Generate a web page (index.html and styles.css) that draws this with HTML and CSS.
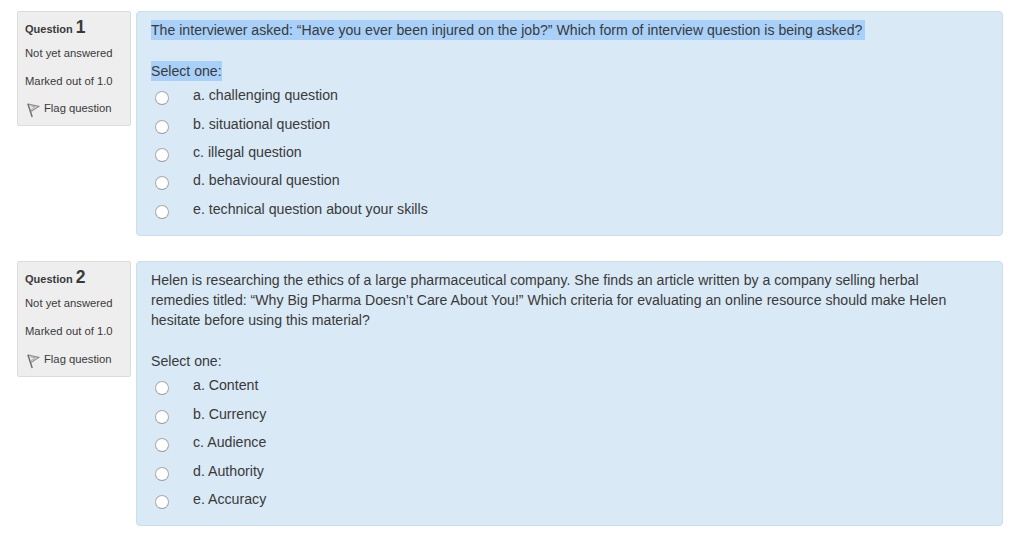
FILE: index.html
```html
<!DOCTYPE html>
<html>
<head>
    <title>Quiz</title>
    <link rel="stylesheet" href="styles.css">
</head>
<body>
<div class="que">
    <div class="info">
        <h3 class="qno">Question <span>1</span></h3>
        <div class="state">Not yet answered</div>
        <div class="grade">Marked out of 1.0</div>
        <div class="flag">
            <svg class="flag-icon" width="13" height="16" viewBox="0 0 13 16"><path d="M1 2 L11.8 4.4 L4.2 9.2" fill="none" stroke="#8c8c8c" stroke-width="1.2"/><path d="M3.4 3.8 L8.2 4.9 L4 7.6" fill="none" stroke="#a8a8a8" stroke-width="1"/><path d="M0.9 1.8 L5.2 15" fill="none" stroke="#707070" stroke-width="1.5"/></svg>
            Flag question
        </div>
    </div>
    <div class="content">
        <p class="qtext"><span class="sel">The interviewer asked: “Have you ever been injured on the job?” Which form of interview question is being asked?</span></p>
        <div class="prompt"><span class="sel">Select one:</span></div>
        <div class="answers">
            <label class="answer"><span class="radio"></span>a. challenging question</label>
            <label class="answer"><span class="radio"></span>b. situational question</label>
            <label class="answer"><span class="radio"></span>c. illegal question</label>
            <label class="answer"><span class="radio"></span>d. behavioural question</label>
            <label class="answer"><span class="radio"></span>e. technical question about your skills</label>
        </div>
    </div>
</div>
<div class="que">
    <div class="info">
        <h3 class="qno">Question <span>2</span></h3>
        <div class="state">Not yet answered</div>
        <div class="grade">Marked out of 1.0</div>
        <div class="flag">
            <svg class="flag-icon" width="13" height="16" viewBox="0 0 13 16"><path d="M1 2 L11.8 4.4 L4.2 9.2" fill="none" stroke="#8c8c8c" stroke-width="1.2"/><path d="M3.4 3.8 L8.2 4.9 L4 7.6" fill="none" stroke="#a8a8a8" stroke-width="1"/><path d="M0.9 1.8 L5.2 15" fill="none" stroke="#707070" stroke-width="1.5"/></svg>
            Flag question
        </div>
    </div>
    <div class="content">
        <p class="qtext">Helen is researching the ethics of a large pharmaceutical company. She finds an article written by a company selling herbal remedies titled: “Why Big Pharma Doesn’t Care About You!” Which criteria for evaluating an online resource should make Helen hesitate before using this material?</p>
        <div class="prompt">Select one:</div>
        <div class="answers">
            <label class="answer"><span class="radio"></span>a. Content</label>
            <label class="answer"><span class="radio"></span>b. Currency</label>
            <label class="answer"><span class="radio"></span>c. Audience</label>
            <label class="answer"><span class="radio"></span>d. Authority</label>
            <label class="answer"><span class="radio"></span>e. Accuracy</label>
        </div>
    </div>
</div>
</body>
</html>
```

FILE: styles.css
```css
body {
    font-family: "Liberation Sans", Arial, sans-serif;
    font-size: 14.12px;
    color: #3a3a3a;
    background-color: #fff;
    margin: 0;
    padding: 11px 9px 0 17px;
}
.que {
    display: flex;
    align-items: flex-start;
    gap: 5px;
    margin-bottom: 25px;
}
.info {
    width: 114px;
    box-sizing: border-box;
    padding: 7px 7px 0;
    height: 115px;
    background-color: #eee;
    border: 1px solid #dcdcdc;
    border-radius: 2px;
    font-size: 11.25px;
    flex-shrink: 0;
}
.que + .que .info {
    height: 116px;
}
.qno {
    margin: 0;
    font-size: 11px;
    line-height: 16px;
    font-weight: bold;
}
.qno span {
    font-size: 17.5px;
}
.state {
    line-height: 16px;
    margin-top: 8px;
}
.grade {
    line-height: 16px;
    margin-top: 12px;
}
.flag {
    margin-top: 11px;
    line-height: 16px;
    display: flex;
    gap: 4px;
}
.que + .que .flag {
    margin-top: 12px;
}
.flag-icon {
    margin: 2px 0 0 2px;
    flex-shrink: 0;
}
.content {
    flex: 1;
    box-sizing: border-box;
    height: 225px;
    padding: 8px 15px 0 14px;
    background-color: #d9e9f5;
    border: 1px solid #c5e0ee;
    border-radius: 4px;
}
.que + .que .content {
    height: 265px;
}
.qtext {
    margin: 0;
    padding-right: 30px;
    line-height: 20px;
}
.prompt {
    margin-top: 21px;
    line-height: 20px;
}
.sel {
    display: inline-block;
    padding-right: 3px;
    background-color: #a8d0f8;
}
.prompt .sel {
    padding-right: 0;
}
.answers {
    margin-top: 4.15px;
    font-size: 14.18px;
}
.que + .que .answers {
    margin-top: 4.35px;
}
.answer {
    display: flex;
    align-items: flex-start;
    height: 28.4px;
    line-height: 20px;
}
.radio {
    width: 12px;
    height: 12px;
    margin: 6px 24px 0 4px;
    border: 1px solid #aaa;
    border-bottom-color: #999;
    border-radius: 50%;
    background-color: #fff;
    flex-shrink: 0;
}
```
